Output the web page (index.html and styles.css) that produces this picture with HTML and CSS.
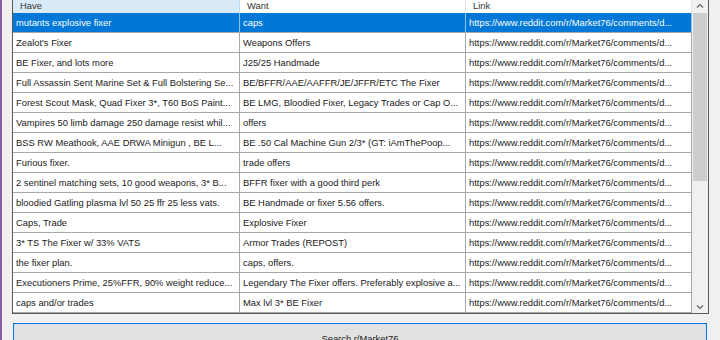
FILE: index.html
```html
<!DOCTYPE html>
<html>
<head>
<meta charset="utf-8">
<link rel="stylesheet" href="styles.css">
</head>
<body>
<div class="window">
  <div class="grid">
    <div class="table">
      <div class="row head">
        <div class="cell hot">Have</div>
        <div class="cell">Want</div>
        <div class="cell">Link</div>
      </div>
      <div class="row sel">
        <div class="cell">mutants explosive fixer</div>
        <div class="cell">caps</div>
        <div class="cell">https://www.reddit.com/r/Market76/comments/d...</div>
      </div>
      <div class="row">
        <div class="cell">Zealot's Fixer</div>
        <div class="cell">Weapons Offers</div>
        <div class="cell">https://www.reddit.com/r/Market76/comments/d...</div>
      </div>
      <div class="row">
        <div class="cell">BE Fixer, and lots more</div>
        <div class="cell">J25/25 Handmade</div>
        <div class="cell">https://www.reddit.com/r/Market76/comments/d...</div>
      </div>
      <div class="row">
        <div class="cell">Full Assassin Sent Marine Set &amp; Full Bolstering Se...</div>
        <div class="cell">BE/BFFR/AAE/AAFFR/JE/JFFR/ETC The Fixer</div>
        <div class="cell">https://www.reddit.com/r/Market76/comments/d...</div>
      </div>
      <div class="row">
        <div class="cell">Forest Scout Mask, Quad Fixer 3*, T60 BoS Paint...</div>
        <div class="cell">BE LMG, Bloodied Fixer, Legacy Trades or Cap O...</div>
        <div class="cell">https://www.reddit.com/r/Market76/comments/d...</div>
      </div>
      <div class="row">
        <div class="cell">Vampires 50 limb damage 250 damage resist whil...</div>
        <div class="cell">offers</div>
        <div class="cell">https://www.reddit.com/r/Market76/comments/d...</div>
      </div>
      <div class="row">
        <div class="cell">BSS RW Meathook, AAE DRWA Minigun , BE L...</div>
        <div class="cell">BE .50 Cal Machine Gun 2/3* (GT: iAmThePoop...</div>
        <div class="cell">https://www.reddit.com/r/Market76/comments/d...</div>
      </div>
      <div class="row">
        <div class="cell">Furious fixer.</div>
        <div class="cell">trade offers</div>
        <div class="cell">https://www.reddit.com/r/Market76/comments/d...</div>
      </div>
      <div class="row">
        <div class="cell">2 sentinel matching sets, 10 good weapons, 3* B...</div>
        <div class="cell">BFFR fixer with a good third perk</div>
        <div class="cell">https://www.reddit.com/r/Market76/comments/d...</div>
      </div>
      <div class="row">
        <div class="cell">bloodied Gatling plasma lvl 50 25 ffr 25 less vats.</div>
        <div class="cell">BE Handmade or fixer 5.56 offers.</div>
        <div class="cell">https://www.reddit.com/r/Market76/comments/d...</div>
      </div>
      <div class="row">
        <div class="cell">Caps, Trade</div>
        <div class="cell">Explosive Fixer</div>
        <div class="cell">https://www.reddit.com/r/Market76/comments/d...</div>
      </div>
      <div class="row">
        <div class="cell">3* TS The Fixer w/ 33% VATS</div>
        <div class="cell">Armor Trades (REPOST)</div>
        <div class="cell">https://www.reddit.com/r/Market76/comments/d...</div>
      </div>
      <div class="row">
        <div class="cell">the fixer plan.</div>
        <div class="cell">caps, offers.</div>
        <div class="cell">https://www.reddit.com/r/Market76/comments/d...</div>
      </div>
      <div class="row">
        <div class="cell">Executioners Prime, 25%FFR, 90% weight reduce...</div>
        <div class="cell">Legendary The Fixer offers. Preferably explosive a...</div>
        <div class="cell">https://www.reddit.com/r/Market76/comments/d...</div>
      </div>
      <div class="row">
        <div class="cell">caps and/or trades</div>
        <div class="cell">Max lvl 3* BE Fixer</div>
        <div class="cell">https://www.reddit.com/r/Market76/comments/d...</div>
      </div>
    </div>
    <div class="scrollbar">
      <svg class="arrow" width="16" height="12" viewBox="0 0 16 12"><path d="M5 7.5 L8 4.5 L11 7.5" fill="none" stroke="#606060" stroke-width="1.2"/></svg>
      <div class="track"><div class="thumb"></div></div>
      <svg class="arrow" width="16" height="12" viewBox="0 0 16 12"><path d="M5 4.5 L8 7.5 L11 4.5" fill="none" stroke="#606060" stroke-width="1.2"/></svg>
    </div>
  </div>
  <div class="button">Search r/Market76</div>
</div>
</body>
</html>
```

FILE: styles.css
```css
html, body {
  margin: 0;
  padding: 0;
  background: #f4f1f6;
  overflow: hidden;
}
body {
  width: 720px;
  height: 340px;
  font-family: "Liberation Sans", Arial, sans-serif;
  font-size: 9.4px;
  color: #000;
}
.window {
  width: 714px;
  height: 340px;
  border-left: 2px solid #8d5ca6;
  border-right: 2px solid #8d5ca6;
  background: #f0f0f0;
  padding-left: 10px;
  box-sizing: content-box;
  display: flex;
  flex-direction: column;
}
.grid {
  display: flex;
  width: 695px;
  border: 1px solid #5a5a5a;
  border-top: none;
  background: #fff;
}
.table {
  display: flex;
  flex-direction: column;
}
.row {
  display: grid;
  grid-template-columns: 227px 226px 226px;
  height: 20px;
}
.cell {
  border-right: 1px solid #a8a8a8;
  border-bottom: 1px solid #a8a8a8;
  padding-left: 3px;
  padding-right: 2px;
  line-height: 19px;
  white-space: nowrap;
  overflow: hidden;
  text-overflow: ellipsis;
  color: #1a1a1a;
}
.head {
  height: 13px;
}
.head .cell {
  line-height: 11px;
  border-bottom: none;
  border-right: 1px solid #e3e3e3;
  padding-left: 7px;
  color: #333;
  background: #fff;
}
.head .cell.hot {
  background: #d9ebf9;
  border-right-color: #bcdcf4;
}
.sel .cell {
  background: #0078d7;
  color: #fff;
  border-right-color: #8fc0ea;
}
.scrollbar {
  width: 16px;
  background: #f0f0f0;
  display: flex;
  flex-direction: column;
}
.arrow {
  display: block;
  flex: none;
}
.track {
  flex: 1;
  padding: 1px 1px 0;
}
.thumb {
  height: 168px;
  background: #cdcdcd;
}
.button {
  margin-top: 9px;
  margin-left: 1px;
  width: 692px;
  height: 30px;
  border: 1px solid #0078d7;
  background: #e1e1e1;
  text-align: center;
  line-height: 29px;
  color: #222;
  box-shadow: inset 0 0 0 1px #cfe3f6;
}
```
